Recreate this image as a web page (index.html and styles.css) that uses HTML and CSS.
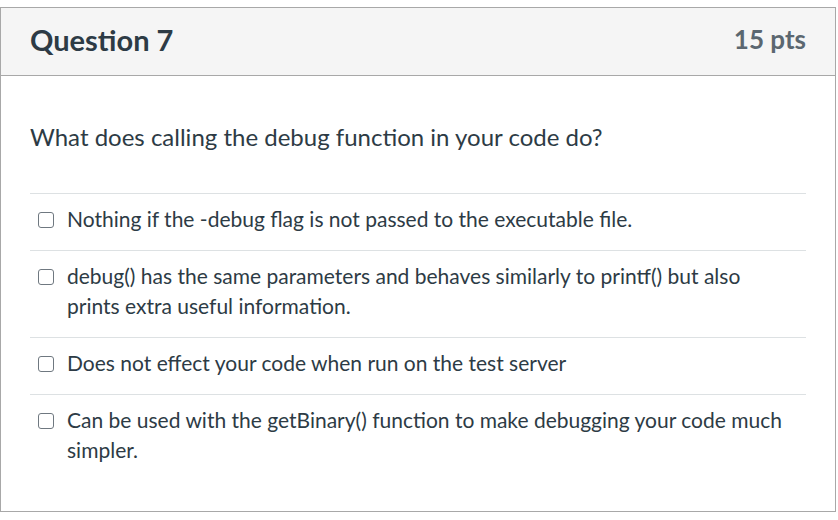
FILE: index.html
```html
<!DOCTYPE html>
<html>
<head>
<meta charset="utf-8">
<link rel="stylesheet" href="styles.css">
</head>
<body>
<div class="quiz">
  <div class="header">
    <h2 class="title">Question 7</h2>
    <div class="pts">15 pts</div>
  </div>
  <div class="content">
    <p class="question">What does calling the debug function in your code do?</p>
    <div class="answers">
      <label class="answer"><span class="box"></span><span class="txt">Nothing if the -debug flag is not passed to the executable file.</span></label>
      <label class="answer"><span class="box"></span><span class="txt">debug() has the same parameters and behaves similarly to printf() but also prints extra useful information.</span></label>
      <label class="answer"><span class="box"></span><span class="txt">Does not effect your code when run on the test server</span></label>
      <label class="answer"><span class="box"></span><span class="txt">Can be used with the getBinary() function to make debugging your code much simpler.</span></label>
    </div>
  </div>
</div>
</body>
</html>
```
FILE: styles.css
```css
html, body { margin: 0; padding: 0; background: #fff; }
body { font-family: Lato, "Noto Sans", sans-serif; color: #2d3b45; }
.quiz {
  margin-top: 7px;
  width: 834px;
  height: 503px;
  border: 1px solid #a8a8a8;
  box-sizing: content-box;
}
.header {
  height: 68px;
  background: #f5f5f5;
  border-bottom: 1px solid #a8a8a8;
  display: flex;
  align-items: center;
  justify-content: space-between;
  padding: 0 29px 5px 29px;
  box-sizing: border-box;
}
.title { margin: 0; font-size: 29px; font-weight: 700; color: #2d3b45; }
.pts { font-size: 26px; font-weight: 700; color: #5b6770; }
.content { padding: 0 29px; }
.question { margin: 0; padding-top: 46px; font-size: 24px; line-height: 30px; height: 71px; }
.answer {
  display: flex;
  align-items: flex-start;
  border-top: 1px solid #dde1e3;
  padding: 10px 16px 16px 8px;
  font-size: 21px;
  line-height: 30px;
}
.box {
  flex: none;
  width: 14px;
  height: 14px;
  border: 1.5px solid #6f7880;
  border-radius: 3px;
  margin-top: 8px;
  margin-right: 13px;
  background: #fff;
}
.txt { display: block; }
```
